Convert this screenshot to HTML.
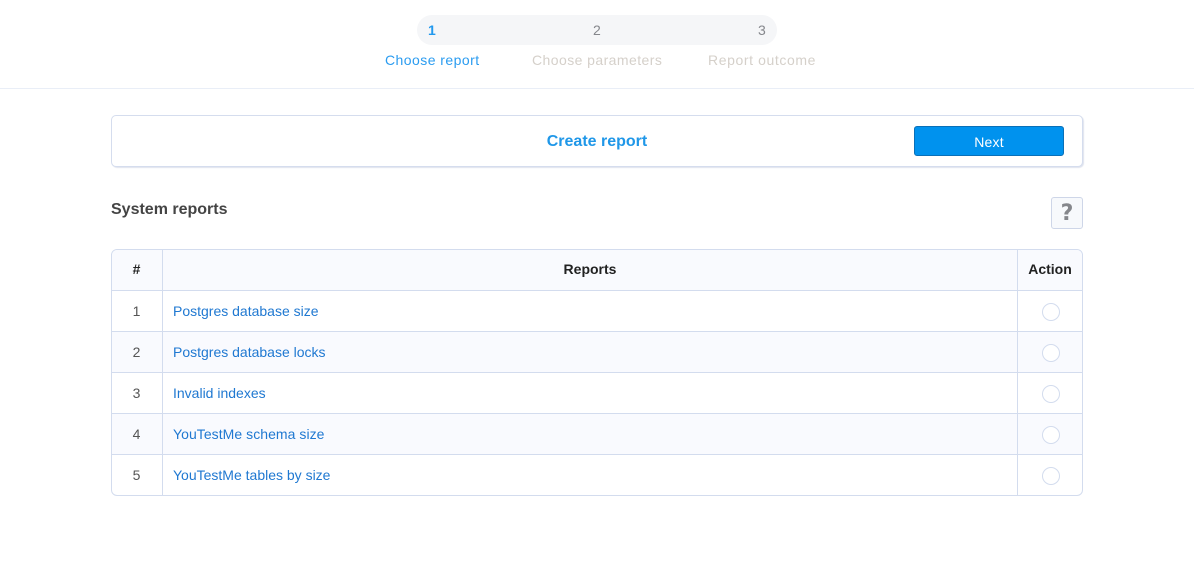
<!DOCTYPE html>
<html>
<head>
<meta charset="utf-8">
<style>
html,body{margin:0;padding:0;background:#fff;}
body{width:1194px;height:569px;position:relative;overflow:hidden;font-family:"Liberation Sans",sans-serif;font-size:14px;color:#444;}
.a{position:absolute;white-space:nowrap;line-height:20px;}
.c{text-align:center;}
.pill{position:absolute;left:417px;top:15px;width:360px;height:30px;border-radius:15px;background:#f5f6f8;}
.hr{position:absolute;left:0;top:88px;width:1194px;height:1px;background:#e9eef7;}
.card{position:absolute;left:111px;top:115px;width:970px;height:50px;border:1px solid #d5ddee;border-radius:5px;box-shadow:1px 1px 1px #dfe3ee;background:#fff;}
.btn{position:absolute;left:914px;top:126px;width:148px;height:28px;border:1px solid #0a70b8;border-radius:3px;background:#0092ee;color:#fff;text-align:center;line-height:30px;font-size:14px;letter-spacing:.2px;}
.help{position:absolute;left:1051px;top:197px;width:30px;height:30px;border:1px solid #ced6e8;border-radius:3px;background:#f7f9fc;}
.q{position:absolute;left:1051px;top:197px;width:32px;height:32px;color:#85878c;font-family:"DejaVu Sans",sans-serif;font-weight:bold;font-size:22px;line-height:33px;text-align:center;}
.tbl{position:absolute;left:111px;top:249px;width:970px;height:245px;border:1px solid #d3dcee;border-radius:6px;overflow:hidden;background:#fff;}
.band{position:absolute;left:0;width:970px;background:#f9fafe;}
.h{position:absolute;left:0;width:970px;height:1px;background:#d3dcee;}
.v{position:absolute;top:0;width:1px;height:245px;background:#d3dcee;}
.n{color:#555;width:51px;left:111px;text-align:center;}
.l{left:173px;color:#1f78d1;}
.th{font-weight:bold;color:#222;}
.r{position:absolute;left:1042px;width:16px;height:16px;border:1px solid #d3dcee;border-radius:50%;background:#fff;}
</style>
</head>
<body>
<div class="pill"></div>
<div class="a" style="left:428px;top:20px;color:#2299ee;font-weight:bold;">1</div>
<div class="a" style="left:593px;top:20px;color:#85878c;">2</div>
<div class="a" style="left:758px;top:20px;color:#85878c;">3</div>
<div class="a" style="left:385px;top:50px;color:#2b9cf0;letter-spacing:.45px;">Choose report</div>
<div class="a" style="left:532px;top:50px;color:#d5d0ca;letter-spacing:.43px;">Choose parameters</div>
<div class="a" style="left:708px;top:50px;color:#d5d0ca;letter-spacing:.6px;">Report outcome</div>
<div class="hr"></div>

<div class="card"></div>
<div class="a c" style="left:497px;width:200px;top:131px;color:#1f97e8;font-weight:bold;font-size:16px;line-height:21px;">Create report</div>
<div class="btn">Next</div>

<div class="a" style="left:111px;top:199px;font-weight:bold;font-size:16px;line-height:21px;color:#444;">System reports</div>
<div class="help"></div>
<div class="q">?</div>

<div class="tbl">
  <div class="band" style="top:0;height:40px;"></div>
  <div class="band" style="top:82px;height:40px;"></div>
  <div class="band" style="top:164px;height:40px;"></div>
  <div class="h" style="top:40px;"></div>
  <div class="h" style="top:81px;"></div>
  <div class="h" style="top:122px;"></div>
  <div class="h" style="top:163px;"></div>
  <div class="h" style="top:204px;"></div>
  <div class="v" style="left:50px;"></div>
  <div class="v" style="left:905px;"></div>
</div>

<div class="a th n" style="top:259px;color:#222;">#</div>
<div class="a th c" style="left:490px;width:200px;top:259px;">Reports</div>
<div class="a th c" style="left:1018px;width:64px;top:259px;">Action</div>

<div class="a n" style="top:301px;">1</div>
<div class="a n" style="top:342px;">2</div>
<div class="a n" style="top:383px;">3</div>
<div class="a n" style="top:424px;">4</div>
<div class="a n" style="top:465px;">5</div>

<div class="a l" style="top:301px;">Postgres database size</div>
<div class="a l" style="top:342px;">Postgres database locks</div>
<div class="a l" style="top:383px;">Invalid indexes</div>
<div class="a l" style="top:424px;letter-spacing:.05px;">YouTestMe schema size</div>
<div class="a l" style="top:465px;">YouTestMe tables by size</div>

<div class="r" style="top:303px;"></div>
<div class="r" style="top:344px;"></div>
<div class="r" style="top:385px;"></div>
<div class="r" style="top:426px;"></div>
<div class="r" style="top:467px;"></div>
</body>
</html>
